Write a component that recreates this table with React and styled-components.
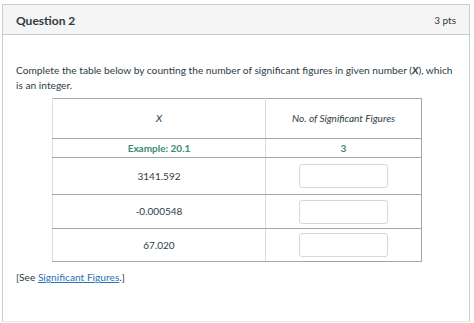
import React from "react";
import styled, { createGlobalStyle } from "styled-components";

const Global = createGlobalStyle`
  html, body { margin: 0; padding: 0; background: #fff; }
  body { font-family: Lato, "Open Sans", sans-serif; color: #2d3b45; }
`;

const Card = styled.div`
  margin: 4px 0 0 2px;
  width: 468px;
  height: 318px;
  border: 1px solid #c7cdd1;
  border-bottom-color: #e6e6e6;
  box-sizing: border-box;
`;

const Header = styled.div`
  height: 30px;
  box-sizing: border-box;
  background: #f5f5f5;
  border-bottom: 1px solid #c7cdd1;
  display: flex;
  align-items: center;
  justify-content: space-between;
  padding: 1px 13px 0 13px;
`;

const Title = styled.div`
  font-weight: 700;
  font-size: 12px;
  color: #2d3b45;
`;

const Points = styled.div`
  font-size: 10px;
  color: #2d3b45;
`;

const Body = styled.div`
  padding: 28px 13px 0 13px;
  font-size: 10.2px;
  line-height: 15px;
  color: #2d3b45;
`;

const Prompt = styled.p`
  margin: 0;
`;

const Table = styled.table`
  margin: 5px 0 0 36px;
  width: 370px;
  border-collapse: collapse;
  border: 1px solid #a5a5a5;
  font-size: 10px;
`;

const Th = styled.th`
  height: ${(p) => p.$h}px;
  font-weight: 400;
  font-style: italic;
  padding: 0;
  border-bottom: 1px solid #a5a5a5;
  border-left: 1px solid #dcdcdc;
  width: ${(p) => p.$w || "auto"};
  color: #2d3b45;
`;

const Td = styled.td`
  height: ${(p) => p.$h}px;
  padding: 0;
  text-align: center;
  border-bottom: 1px solid #a5a5a5;
  border-left: 1px solid #dcdcdc;
  color: ${(p) => (p.$green ? "#3d8a6c" : "#2d3b45")};
  font-weight: ${(p) => (p.$green ? 700 : 400)};
`;

const Box = styled.input`
  display: block;
  margin: 0 auto;
  width: 89px;
  height: 24px;
  box-sizing: border-box;
  border: 1px solid #d5d8da;
  border-radius: 3px;
  background: #fff;
`;

const Footer = styled.p`
  margin: 8px 0 0 0;
`;

const Link = styled.a`
  color: #2b73b7;
  text-decoration: underline;
`;

const Emph = styled.b`
  font-style: italic;
`;

const rows = [
  { x: "3141.592", h: 36 },
  { x: "-0.000548", h: 33 },
  { x: "67.020", h: 32 },
];

export default function App() {
  return (
    <>
      <Global />
      <Card>
        <Header>
          <Title>Question 2</Title>
          <Points>3 pts</Points>
        </Header>
        <Body>
          <Prompt>
            Complete the table below by counting the number of significant figures in given number (<Emph>X</Emph>), which
            is an integer.
          </Prompt>
          <Table>
            <thead>
              <tr>
                <Th $h={39} $w="212px">X</Th>
                <Th $h={39}>No. of Significant Figures</Th>
              </tr>
            </thead>
            <tbody>
              <tr>
                <Td $h={18} $green>Example: 20.1</Td>
                <Td $h={18} $green>3</Td>
              </tr>
              {rows.map((r) => (
                <tr key={r.x}>
                  <Td $h={r.h}>{r.x}</Td>
                  <Td $h={r.h}><Box type="text" /></Td>
                </tr>
              ))}
            </tbody>
          </Table>
          <Footer>
            [See <Link href="#">Significant Figures</Link>.]
          </Footer>
        </Body>
      </Card>
    </>
  );
}
